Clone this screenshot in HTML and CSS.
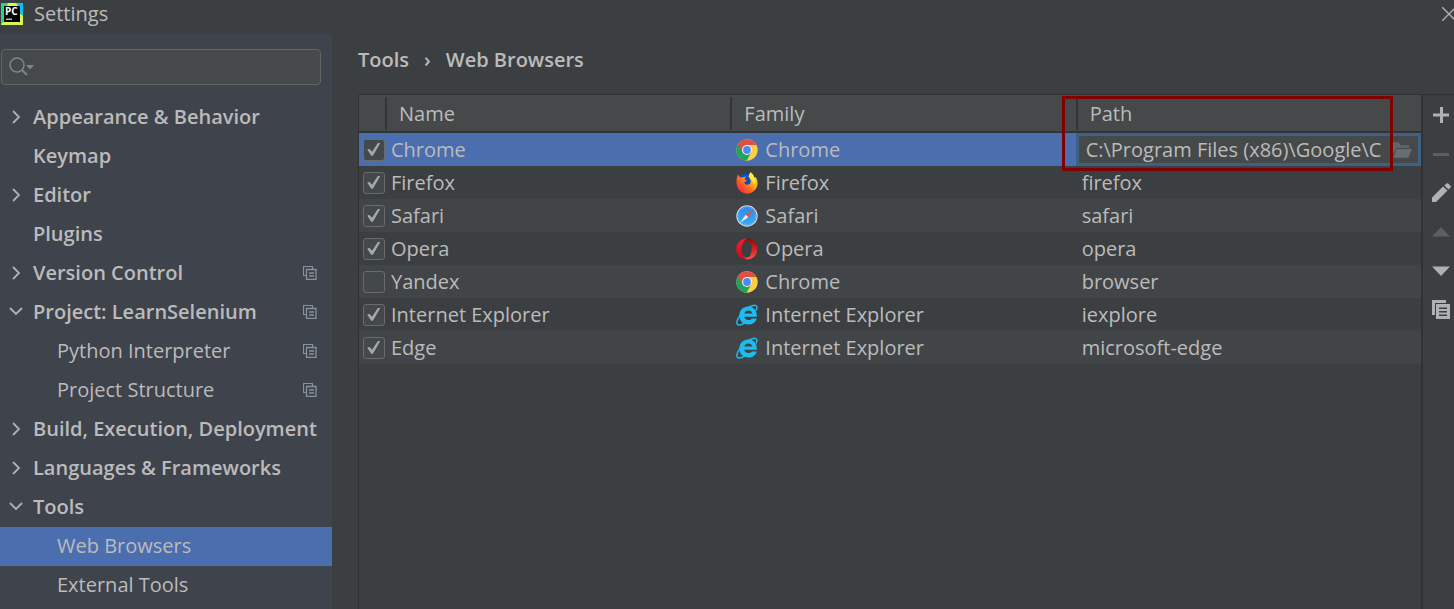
FILE: index.html
```html
<!DOCTYPE html>
<html lang="en">
<head>
  <meta charset="UTF-8">
  <meta name="viewport" content="width=device-width, initial-scale=1.0">
  <title>Settings</title>
  <link rel="stylesheet" href="styles.css">
</head>
<body>
  <!-- shared icons -->
  <svg class="defs" width="0" height="0">
    <defs>
      <linearGradient id="ff" x1="1" y1="0" x2="0" y2="1"><stop offset="0" stop-color="#fff44f"/><stop offset=".35" stop-color="#ffb01e"/><stop offset=".65" stop-color="#ff5a20"/><stop offset="1" stop-color="#e8126a"/></linearGradient>
      <linearGradient id="sf" x1="0" y1="0" x2="0" y2="1"><stop offset="0" stop-color="#2f86ea"/><stop offset="1" stop-color="#35aef5"/></linearGradient>
      <linearGradient id="op" x1="0" y1="0" x2="0" y2="1"><stop offset="0" stop-color="#ff1b2d"/><stop offset="1" stop-color="#c40c1c"/></linearGradient>
      <linearGradient id="op2" x1="0" y1="0" x2="0" y2="1"><stop offset="0" stop-color="#9c0000"/><stop offset="1" stop-color="#ff4b4b"/></linearGradient>
    </defs>
    <symbol id="right" viewBox="0 0 14 14"><path d="M4 1l6 6-6 6" fill="none" stroke="#afb1b3" stroke-width="1.8"/></symbol>
    <symbol id="down" viewBox="0 0 14 14"><path d="M1 3l6 6 6-6" fill="none" stroke="#afb1b3" stroke-width="1.8"/></symbol>
    <symbol id="scope" viewBox="0 0 14 14"><path d="M3.500 9.500h-3v-9h9v3" fill="none" stroke="#87939a" stroke-width="1.200"/><path d="M3.500 3.500h9.500v10H3.500zM6 7h5M6 10h5" fill="none" stroke="#87939a" stroke-width="1.300"/></symbol>
    <symbol id="chrome" viewBox="0 0 22 22">
      <circle cx="11" cy="11" r="10.700" fill="#ffcd40"/>
      <path d="M11 11L1.700 5.600A10.700 10.700 0 0 0 10.500 21.700L15.500 13z" fill="#1da362"/>
      <path d="M1.700 5.700A10.700 10.700 0 0 1 20.400 6H11L6.500 13.500z" fill="#dd5144"/>
      <circle cx="11" cy="11" r="5" fill="#f1f1f1"/><circle cx="11" cy="11" r="3.900" fill="#4c8bf5"/>
    </symbol>
    <symbol id="firefox" viewBox="0 0 22 22">
      <circle cx="11" cy="10.500" r="9" fill="#0a4fc8"/>
      <path d="M1.800 2.500L4.200 5.500 7 5.300 10 4.500 8.500 7.300 11 8.500 8.200 10.500C9 13 12 13.500 14 11.500 15.500 9.500 14.500 6.500 12.500 4.500L14.300.300C17 2 18 4 18.200 5.500L19.800 5.200C22 9 22.200 13 20 16.800A10.600 10.600 0 0 1 .500 11C.300 8 1 5 1.800 2.500z" fill="url(#ff)"/>
      <path d="M14.300.300C17 2 18 4 18.200 5.500 20 8 19.500 11 18 13 17.500 9 14.500 8 12.700 4.500z" fill="#ffe83d"/>
    </symbol>
    <symbol id="safari" viewBox="0 0 22 22">
      <circle cx="11" cy="11" r="10.700" fill="#d4dade"/><circle cx="11" cy="11" r="9.700" fill="url(#sf)"/>
      <circle cx="11" cy="11" r="8.400" fill="none" stroke="#92cdf8" stroke-width="1" stroke-dasharray=".7 1.500"/>
      <path d="M18 4.500L9.700 9.700l2.600 2.600z" fill="#f04a43"/><path d="M4 17.800l5.700-8.100 2.600 2.600z" fill="#edf1f3"/>
    </symbol>
    <symbol id="opera" viewBox="0 0 22 22">
      <path d="M11 .500C16.800.500 21.400 5 21.400 11S17 21.500 11 21.500C7 21.500 5.400 17 5.400 15 7 18.500 8.800 19.600 11 19.600c3 0 4.600-4 4.600-8.600S14 2.400 11 2.400C8.800 2.400 7.200 3.700 5.700 6.800 6.500 2.700 8.500.500 11 .500z" fill="url(#op2)"/>
      <path d="M11 .500C4.800.500.300 5 .300 11S4.800 21.500 11 21.500C7.500 19.500 5.700 16 5.700 11S7.500 2.500 11 .500z" fill="url(#op)"/>
    </symbol>
    <symbol id="ie" viewBox="0 0 22 22">
      <path d="M21 12.800H8.300c.200 2 1.800 3.200 4.300 3.200 1.700 0 2.900-.600 3.600-1.500h4.500c-1.200 4-4.100 6.100-8.300 6.100-5.400 0-9-3.600-9-9 0-5.500 3.600-9.200 9-9.200S21 6.500 21 12.800zM8.400 9.400h7.900c-.300-1.900-1.700-2.900-3.900-2.900s-3.600 1-4 2.900z" fill="#1ebbee"/>
      <path d="M20 6.500C21.800 3 20.800.800 17.200 1.400 13 2.200 7.500 6.500 4 11.400.500 16.400-.2 20.600 2.500 21c1.800.300 4.300-.700 6.500-2.300" fill="none" stroke="#1ebbee" stroke-width="1.500"/>
    </symbol>
  </svg>

  <header class="titlebar">
    <svg class="logo" viewBox="0 0 22 22">
      <path d="M0 0h22v22H0z" fill="#21d789"/><path d="M0 22L7 0h8l7 9v13z" fill="#fcf84a" opacity=".85"/><path d="M17 0h5v13l-6-5z" fill="#07c3f2"/><path d="M0 2l5 4v11l-5 4z" fill="#21d789"/>
      <path d="M3 3h16v16H3z" fill="#000"/><path d="M5 15.500h6V17H5z" fill="#bbb"/>
      <text x="4" y="12" class="logo-text">PC</text>
    </svg>
    <span>Settings</span>
    <button class="close" aria-label="Close"><svg viewBox="0 0 14 14"><path d="M0 0l14 14M14 0L0 14" stroke="#afb1b3" stroke-width="1.400"/></svg></button>
  </header>

  <div class="main">
    <aside class="sidebar">
      <div class="search">
        <svg viewBox="0 0 26 20"><circle cx="8" cy="8" r="7" fill="none" stroke="#7b868c" stroke-width="1.500"/><path d="M13 13l5 5" stroke="#7b868c" stroke-width="2"/><path d="M17 8h8l-4 4.500z" fill="#7b868c"/></svg>
        <input type="text" aria-label="Search settings">
      </div>
      <nav>
        <ul class="tree">
          <li><a href="#"><svg><use href="#right"/></svg><b>Appearance &amp; Behavior</b></a></li>
          <li><a href="#"><svg></svg><b>Keymap</b></a></li>
          <li><a href="#"><svg><use href="#right"/></svg><b>Editor</b></a></li>
          <li><a href="#"><svg></svg><b>Plugins</b></a></li>
          <li><a href="#"><svg><use href="#right"/></svg><b>Version Control</b><svg class="scope"><use href="#scope"/></svg></a></li>
          <li><a href="#"><svg><use href="#down"/></svg><b>Project: LearnSelenium</b><svg class="scope"><use href="#scope"/></svg></a></li>
          <li><a href="#" class="child">Python Interpreter<svg class="scope"><use href="#scope"/></svg></a></li>
          <li><a href="#" class="child">Project Structure<svg class="scope"><use href="#scope"/></svg></a></li>
          <li><a href="#"><svg><use href="#right"/></svg><b>Build, Execution, Deployment</b></a></li>
          <li><a href="#"><svg><use href="#right"/></svg><b>Languages &amp; Frameworks</b></a></li>
          <li><a href="#"><svg><use href="#down"/></svg><b>Tools</b></a></li>
          <li><a href="#" class="child active">Web Browsers</a></li>
          <li><a href="#" class="child">External Tools</a></li>
        </ul>
      </nav>
    </aside>

    <section class="content">
      <h1 class="crumbs"><span>Tools</span><span class="sep">›</span><span>Web Browsers</span></h1>
      <div class="panel">
        <div class="list">
          <table>
            <colgroup><col class="check-col"><col><col><col></colgroup>
            <thead>
              <tr>
                <th></th>
                <th><div>Name</div></th>
                <th><div>Family</div></th>
                <th class="path"><div>Path</div><span class="mark"></span></th>
              </tr>
            </thead>
            <tbody>
              <tr class="selected">
                <td><input type="checkbox" id="b1" checked></td>
                <td><label for="b1">Chrome</label></td>
                <td><span class="family"><svg><use href="#chrome"/></svg>Chrome</span></td>
                <td class="editing">
                  <div class="editor">
                    <input type="text" aria-label="Path" value="C:\Program Files (x86)\Google\C">
                    <button aria-label="Browse"><svg viewBox="0 0 22 16"><path d="M0 0h7l2 3h9v3H5L0 14z" fill="#5f676b"/><path d="M5 7h16l-4 9H1z" fill="#666e72"/></svg></button>
                  </div>
                </td>
              </tr>
              <tr>
                <td><input type="checkbox" id="b2" checked></td>
                <td><label for="b2">Firefox</label></td>
                <td><span class="family"><svg><use href="#firefox"/></svg>Firefox</span></td>
                <td>firefox</td>
              </tr>
              <tr>
                <td><input type="checkbox" id="b3" checked></td>
                <td><label for="b3">Safari</label></td>
                <td><span class="family"><svg><use href="#safari"/></svg>Safari</span></td>
                <td>safari</td>
              </tr>
              <tr>
                <td><input type="checkbox" id="b4" checked></td>
                <td><label for="b4">Opera</label></td>
                <td><span class="family"><svg><use href="#opera"/></svg>Opera</span></td>
                <td>opera</td>
              </tr>
              <tr>
                <td><input type="checkbox" id="b5"></td>
                <td><label for="b5">Yandex</label></td>
                <td><span class="family"><svg><use href="#chrome"/></svg>Chrome</span></td>
                <td>browser</td>
              </tr>
              <tr>
                <td><input type="checkbox" id="b6" checked></td>
                <td><label for="b6">Internet Explorer</label></td>
                <td><span class="family"><svg><use href="#ie"/></svg>Internet Explorer</span></td>
                <td>iexplore</td>
              </tr>
              <tr>
                <td><input type="checkbox" id="b7" checked></td>
                <td><label for="b7">Edge</label></td>
                <td><span class="family"><svg><use href="#ie"/></svg>Internet Explorer</span></td>
                <td>microsoft-edge</td>
              </tr>
            </tbody>
          </table>
        </div>
        <div class="toolbar">
          <button aria-label="Add"><svg viewBox="0 0 20 20"><path d="M9 2h3v6.500h6v3h-6V18H9v-6.500H2v-3h7z" fill="#afb1b3"/></svg></button>
          <button aria-label="Remove" disabled><svg viewBox="0 0 20 20"><path d="M2 9h16v3H2z" fill="#5c5e60"/></svg></button>
          <button aria-label="Edit"><svg viewBox="0 0 20 20"><path d="M1 14.500L12 3.500l4.500 4L5 19H1zM13.300 2.500L15.500.500c.500-.500 1.200-.500 1.700 0l2.300 2.300c.500.500.500 1.200 0 1.700L17.500 6.500z" fill="#afb1b3"/></svg></button>
          <button aria-label="Move up" disabled><svg viewBox="0 0 20 20"><path d="M1 14.500L10 5l9 9.500z" fill="#5c5e60"/></svg></button>
          <button aria-label="Move down"><svg viewBox="0 0 20 20"><path d="M1 5.500h18L10 15z" fill="#afb1b3"/></svg></button>
          <button aria-label="Copy"><svg viewBox="0 0 20 20"><path d="M1 0h14v3H4v12H1z" fill="#afb1b3"/><path d="M5 4h14v15H5zM8 7.500V9h8V7.500zM8 11v1.500h8V11zm0 3.500V16h8v-1.500z" fill="#afb1b3" fill-rule="evenodd"/></svg></button>
        </div>
      </div>
    </section>
  </div>
</body>
</html>
```
FILE: styles.css
```css
*{margin:0;padding:0;box-sizing:border-box;}
body{
  min-height:100vh;
  display:flex;
  flex-direction:column;
  background:#3c3f41;
  color:#bbb;
  font:20px/24px "Open Sans","Noto Sans",sans-serif;
  overflow:hidden;
}
button{border:0;background:none;color:inherit;}
svg{display:block;flex:none;}
a{color:inherit;text-decoration:none;}
b,h1{font-weight:600;}
.defs{position:absolute;}

.titlebar{
  height:34px;
  display:flex;
  align-items:center;
  gap:11px;
  padding:0 0 6px 1px;
}
.logo{width:22px;height:22px;}
.logo-text{font:bold 10px "Open Sans",sans-serif;fill:#fff;}
.close{width:12px;margin-left:auto;}
.close svg{width:14px;height:14px;}

.main{flex:1;display:flex;}
.sidebar{width:332px;flex:none;background:#3f434c;padding-top:15px;}
.search{
  height:36px;
  margin:0 11px 13px 1px;
  padding-left:7px;
  display:flex;
  align-items:center;
  border:1px solid #646464;
  border-radius:4px;
  background:#45494a;
}
.search svg{width:26px;height:20px;}
.search input{flex:1;min-width:0;border:0;outline:0;background:none;color:inherit;font:inherit;}

.tree{list-style:none;}
.tree a{
  height:39px;
  display:flex;
  align-items:center;
  gap:10px;
  padding:0 15px 2px 9px;
  white-space:nowrap;
}
.tree svg{width:14px;height:14px;}
.tree .scope{margin-left:auto;}
.tree .child{padding-left:57px;}
.tree .active{background:#4b6eaf;}

.content{
  flex:1;
  min-width:0;
  display:flex;
  flex-direction:column;
  padding-left:26px;
}
.crumbs{
  display:flex;
  gap:15px;
  padding:14px 0 22px;
  font-size:20px;
}
.panel{
  flex:1;
  display:flex;
  border:1px solid #323232;
  border-width:1px 0 0 1px;
}
.list{flex:1;min-width:0;}
table{width:100%;table-layout:fixed;border-spacing:0;}
.check-col{width:26px;}
th{
  height:38px;
  padding:2px 0 1px;
  background:#45494a;
  border-bottom:2px solid #323537;
  font-weight:normal;
  text-align:left;
}
th div{height:33px;padding-left:12px;border-left:2px solid #323537;line-height:33px;}
.path{position:relative;}
/* highlight over the path column */
.mark{
  position:absolute;
  top:1px;
  left:-14px;
  right:28px;
  height:75px;
  border:3px solid #800000;
  pointer-events:none;
  z-index:1;
}
td{height:33px;padding-left:6px;white-space:nowrap;}
td:first-child{padding-left:4px;}
tbody tr:nth-child(odd){background:#414547;}
tbody tr.selected{background:#4b6eaf;}
.family{display:flex;align-items:center;gap:7px;}
.family svg{width:22px;height:22px;}
input[type=checkbox]{
  display:block;
  appearance:none;
  width:22px;
  height:22px;
  border:1px solid #6b6b6b;
  border-radius:3px;
  background:#43494a;
}
input[type=checkbox]:checked::before{
  content:"";
  display:block;
  width:14px;
  height:14px;
  margin:3px;
  background:#a7a7a7;
  clip-path:polygon(2% 52%,16% 44%,36% 66%,80% 0,94% 6%,42% 94%,30% 94%);
}
td.editing{padding:0;}
.editor{
  height:33px;
  display:flex;
  align-items:center;
  padding-left:7px;
  border:3px solid #3d6185;
  background:#45494a;
}
.editor input{flex:1;min-width:0;border:0;outline:0;background:none;color:inherit;font:inherit;}
.editor button{margin:0 5px 0 7px;}
.editor svg{width:21px;height:16px;}

.toolbar{
  width:33px;
  flex:none;
  padding-left:8px;
  border-left:2px solid #323232;
}
.toolbar button{display:flex;align-items:center;height:39px;}
.toolbar svg{width:20px;height:20px;}
```
